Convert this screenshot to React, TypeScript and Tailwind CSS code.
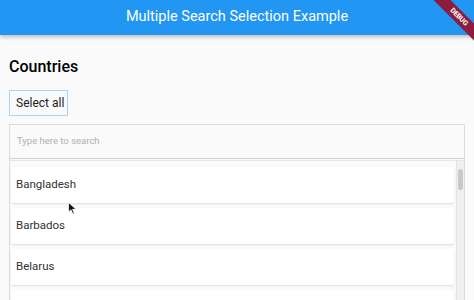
import React from 'react';

const countries = ['Bangladesh', 'Barbados', 'Belarus', ''];

export default function App() {
  return (
    <div
      className="relative w-[474px] h-[300px] overflow-hidden bg-[#fafafa]"
      style={{ fontFamily: 'Roboto, "Noto Sans", sans-serif' }}
    >
      <header className="relative z-10 h-[35px] bg-[#2196f3] flex items-center justify-center shadow-[0_2px_4px_rgba(0,0,0,0.25)]">
        <h1 className="text-white text-[14.5px] leading-none">Multiple Search Selection Example</h1>
      </header>

      {/* debug ribbon */}
      <div className="absolute z-20 top-[11px] right-[-21px] w-[72px] h-[12px] rotate-45 bg-[#8b1d3f] flex items-center justify-center">
        <span className="text-white text-[7px] font-bold leading-none tracking-tight">DEBUG</span>
      </div>

      <div className="px-[9px] pt-[22px]">
        <h2 className="text-[16px] font-medium text-black leading-[20px]">Countries</h2>

        <button className="mt-[13px] h-[26px] w-[59px] border border-[#a8d4f7] bg-[#fafafa] text-[12px] text-[#222] flex items-center pl-[6px]">
          Select all
        </button>

        <div className="mt-[8px] h-[35px] border border-[#dcdcdc] border-b-[#d0d0d0] flex items-center pl-[7px]">
          <span className="text-[9.5px] text-[#b0b0b0]">Type here to search</span>
        </div>

        <div className="relative border-x border-[#dcdcdc] h-[160px]">
          <div className="h-[2px] border-b border-[#e6e6e6]" />
          <div className="flex flex-col gap-[5px] pt-[6px] pr-[10px] pl-[1px]">
            {countries.map((c, i) => (
              <div
                key={i}
                className="h-[36px] bg-white rounded-[2px] shadow-[0_1px_2px_rgba(0,0,0,0.12)] flex items-center pl-[5px]"
              >
                <span className="text-[11.5px] text-[#333]">{c}</span>
              </div>
            ))}
          </div>
          {/* scrollbar */}
          <div className="absolute top-[2px] right-0 bottom-0 w-[8px] bg-[#f0f0f0] border-l border-[#e4e4e4]">
            <div className="mt-[8px] ml-[1px] w-[5px] h-[21px] rounded-full bg-[#c8c8c8]" />
          </div>
        </div>
      </div>

      {/* mouse cursor */}
      <svg className="absolute left-[68px] top-[202px]" width="9" height="13" viewBox="0 0 9 13">
        <path d="M0.5 0.5 L0.5 10 L3 7.8 L4.8 12 L6.3 11.3 L4.6 7.3 L8 7.3 Z" fill="#111" stroke="#fff" strokeWidth="0.8" />
      </svg>
    </div>
  );
}
